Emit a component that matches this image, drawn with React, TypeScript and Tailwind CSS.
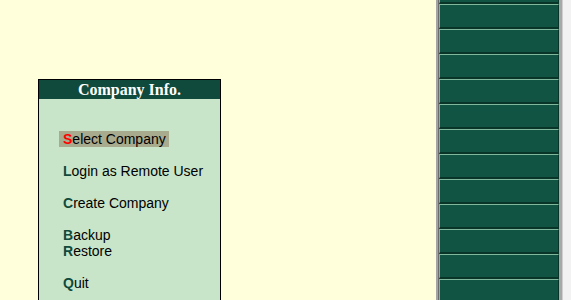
import React from 'react'

const ITEMS: { key: string; rest: string; gap?: boolean; selected?: boolean }[] = [
  { key: 'S', rest: 'elect Company', selected: true },
  { key: 'L', rest: 'ogin as Remote User', gap: true },
  { key: 'C', rest: 'reate Company', gap: true },
  { key: 'B', rest: 'ackup', gap: true },
  { key: 'R', rest: 'estore' },
  { key: 'Q', rest: 'uit', gap: true },
]

function ButtonCell() {
  return (
    <div className="h-[25px] shrink-0 bg-[#125443] border-t border-l border-[#7fb89c] border-b-2 border-b-[#093528] border-r border-r-[#093528]" />
  )
}

export default function App() {
  return (
    <div className="flex h-[300px] w-[571px] overflow-hidden bg-[#ffffdc] font-['Liberation_Sans',Arial,sans-serif]">
      <div className="flex-1">
        <div className="ml-[38px] mt-[79px] w-[183px] h-[240px] border border-black bg-[#c9e5c9]">
          <div className="h-[19px] bg-[#0f4a3c] text-center text-white font-bold text-[16px] leading-[19px] font-['Liberation_Serif','Times_New_Roman',serif]">
            Company Info.
          </div>
          <div className="pt-[32px] pl-[20px] flex flex-col items-start">
            {ITEMS.map((it) => (
              <div
                key={it.key}
                className={`h-[16px] text-[14px] leading-[16px] text-black pl-[4px] pr-[3px] ${it.gap ? 'mt-[16px]' : ''} ${it.selected ? 'bg-[#a9ab8f]' : ''}`}
              >
                <span className={`font-bold ${it.selected ? 'text-[#ff0000]' : 'text-[#0f4a3c]'}`}>{it.key}</span>
                {it.rest}
              </div>
            ))}
          </div>
        </div>
      </div>
      <div className="flex w-[135px] shrink-0">
        <div className="w-[2px] bg-[#a4a4a4]" />
        <div className="w-[1px] bg-[#6c6c6c]" />
        <div className="w-[120px] flex flex-col -mt-[21px]">
          {Array.from({ length: 14 }).map((_, i) => (
            <ButtonCell key={i} />
          ))}
        </div>
        <div className="w-[3px] bg-[#a8a8a8]" />
        <div className="w-[1px] bg-[#cfcfcf]" />
        <div className="flex-1 bg-[#f2f2f2]" />
      </div>
    </div>
  )
}
